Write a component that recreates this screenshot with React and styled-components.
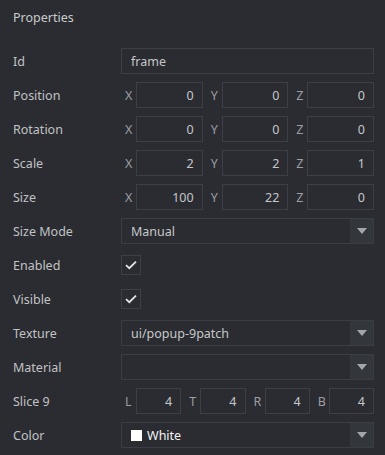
import React from "react";
import styled, { createGlobalStyle } from "styled-components";

const GlobalStyle = createGlobalStyle`
  html, body {
    margin: 0;
    background: #2a2c31;
  }
  body {
    font-family: "Noto Sans", "Open Sans", sans-serif;
    font-size: 12.5px;
    color: #c3c4c6;
  }
`;

const Panel = styled.div`
  width: 385px;
  height: 455px;
  box-sizing: border-box;
  padding: 0 11px 0 13px;
  overflow: hidden;
`;

const Title = styled.div`
  height: 48px;
  line-height: 36px;
  color: #c9cacc;
`;

const Grid = styled.div`
  display: grid;
  grid-template-columns: 108px 1fr;
  grid-auto-rows: 26px;
  row-gap: 8px;
  align-items: center;
`;

const Label = styled.div`
  color: #c1c2c4;
`;

const Box = styled.div`
  box-sizing: border-box;
  height: 26px;
  border: 1px solid #3c3f45;
  background: #2a2c31;
  display: flex;
  align-items: center;
  color: #c6c7c9;
  padding: ${(p) => (p.$right ? "0 8px 0 0" : "0 0 0 9px")};
  justify-content: ${(p) => (p.$right ? "flex-end" : "flex-start")};
  flex: 1;
  min-width: 0;
`;

const Vec = styled.div`
  display: grid;
  grid-template-columns: repeat(${(p) => p.$n}, 1fr);
  column-gap: 4px;
`;

const Axis = styled.div`
  display: flex;
  align-items: center;
`;

const AxisName = styled.span`
  width: 15px;
  padding-left: 4px;
  box-sizing: border-box;
  color: #9c9ea2;
`;

const Select = styled.div`
  box-sizing: border-box;
  height: 26px;
  border: 1px solid #3a3d43;
  display: flex;
  align-items: stretch;
`;

const SelectText = styled.div`
  flex: 1;
  display: flex;
  align-items: center;
  gap: 5px;
  padding-left: 9px;
  color: ${(p) => (p.$strong ? "#f2f2f2" : "#c6c7c9")};
`;

const Arrow = styled.div`
  width: 23px;
  background: #33363b;
  display: flex;
  align-items: center;
  justify-content: center;
  &::after {
    content: "";
    border-left: 5px solid transparent;
    border-right: 5px solid transparent;
    border-top: 6px solid #a4a6aa;
  }
`;

const Check = styled.div`
  box-sizing: border-box;
  width: 20px;
  height: 20px;
  border: 1px solid #3c3f45;
  display: flex;
  align-items: center;
  justify-content: center;
`;

const Swatch = styled.span`
  width: 11px;
  height: 11px;
  background: #ffffff;
`;

const vecRows = [
  ["Position", ["X", "Y", "Z"], [0, 0, 0]],
  ["Rotation", ["X", "Y", "Z"], [0, 0, 0]],
  ["Scale", ["X", "Y", "Z"], [2, 2, 1]],
  ["Size", ["X", "Y", "Z"], [100, 22, 0]],
];

function Vector({ axes, values }) {
  return (
    <Vec $n={axes.length}>
      {axes.map((a, i) => (
        <Axis key={a}>
          <AxisName>{a}</AxisName>
          <Box $right>{values[i]}</Box>
        </Axis>
      ))}
    </Vec>
  );
}

function Dropdown({ children, strong }) {
  return (
    <Select>
      <SelectText $strong={strong}>{children}</SelectText>
      <Arrow />
    </Select>
  );
}

function Checkbox() {
  return (
    <Check>
      <svg width="12" height="10" viewBox="0 0 12 10">
        <path d="M1 5.2 L4.3 8.2 L11 1.6" fill="none" stroke="#e4e4e4" strokeWidth="1.8" />
      </svg>
    </Check>
  );
}

export default function App() {
  return (
    <Panel>
      <GlobalStyle />
      <Title>Properties</Title>
      <Grid>
        <Label>Id</Label>
        <Box>frame</Box>
        {vecRows.map(([name, axes, values]) => (
          <React.Fragment key={name}>
            <Label>{name}</Label>
            <Vector axes={axes} values={values} />
          </React.Fragment>
        ))}
        <Label>Size Mode</Label>
        <Dropdown>Manual</Dropdown>
        <Label>Enabled</Label>
        <Checkbox />
        <Label>Visible</Label>
        <Checkbox />
        <Label>Texture</Label>
        <Dropdown>ui/popup-9patch</Dropdown>
        <Label>Material</Label>
        <Dropdown />
        <Label>Slice 9</Label>
        <Vector axes={["L", "T", "R", "B"]} values={[4, 4, 4, 4]} />
        <Label>Color</Label>
        <Dropdown strong>
          <Swatch />
          White
        </Dropdown>
      </Grid>
    </Panel>
  );
}
